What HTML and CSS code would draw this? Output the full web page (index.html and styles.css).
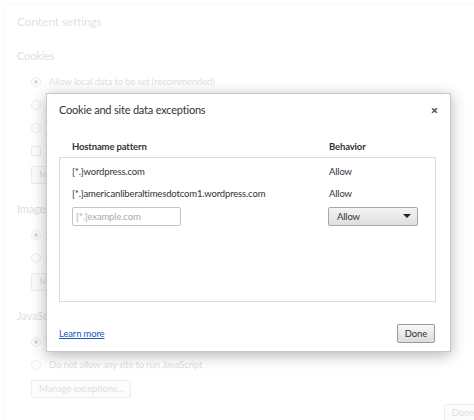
FILE: index.html
```html
<!DOCTYPE html>
<html>
<head>
<meta charset="utf-8">
<link rel="stylesheet" href="styles.css">
</head>
<body>
<div class="page">
  <div class="frame">
    <h1 class="page-title">Content settings</h1>
    <section class="group">
      <h2 class="group-title">Cookies</h2>
      <div class="opt"><span class="radio on"></span>Allow local data to be set (recommended)</div>
      <div class="opt"><span class="radio"></span>Keep local data only until I quit my browser</div>
      <div class="opt"><span class="radio"></span>Block sites from setting any data</div>
      <div class="opt"><span class="check"></span>Block third-party cookies and site data</div>
      <div class="btns"><span class="pbtn">Manage exceptions...</span><span class="pbtn">All cookies and site data...</span></div>
    </section>
    <section class="group">
      <h2 class="group-title">Images</h2>
      <div class="opt"><span class="radio on"></span>Show all images (recommended)</div>
      <div class="opt"><span class="radio"></span>Do not show any images</div>
      <div class="btns"><span class="pbtn">Manage exceptions...</span></div>
    </section>
    <section class="group">
      <h2 class="group-title">JavaScript</h2>
      <div class="opt"><span class="radio on"></span>Allow all sites to run JavaScript (recommended)</div>
      <div class="opt"><span class="radio"></span>Do not allow any site to run JavaScript</div>
      <div class="btns"><span class="pbtn">Manage exceptions...</span></div>
    </section>
    <div class="page-foot"><span class="pbtn">Done</span></div>
  </div>
  <div class="veil"></div>
</div>

<div class="dialog">
  <div class="dlg-head">
    <span class="dlg-title">Cookie and site data exceptions</span>
    <span class="close">&#215;</span>
  </div>
  <div class="cols">
    <span class="col-host">Hostname pattern</span>
    <span class="col-beh">Behavior</span>
  </div>
  <div class="list">
    <div class="row"><span class="host">[*.]wordpress.com</span><span class="beh">Allow</span></div>
    <div class="row"><span class="host">[*.]americanliberaltimesdotcom1.wordpress.com</span><span class="beh">Allow</span></div>
    <div class="row new">
      <span class="host"><span class="input">[*.]example.com</span></span>
      <span class="beh"><span class="select">Allow<span class="caret"></span></span></span>
    </div>
  </div>
  <div class="dlg-foot">
    <a class="learn" href="#">Learn more</a>
    <span class="done">Done</span>
  </div>
</div>
</body>
</html>
```

FILE: styles.css
```css
* { box-sizing: border-box; }
html, body { margin: 0; padding: 0; }
body {
  width: 474px;
  height: 420px;
  overflow: hidden;
  background: #fff;
  font-family: "Lato", "Open Sans", sans-serif;
  font-size: 9.5px;
  letter-spacing: -0.15px;
  color: #333;
  position: relative;
}
.page { position: relative; width: 474px; height: 420px; padding: 4px 0 0 4px; }
.frame {
  border-left: 1px solid #d8d8d8;
  border-top: 1px solid #e4e4e4;
  height: 100%;
  padding: 8px 0 0 12px;
  display: flex;
  flex-direction: column;
}
.page-title { margin: 0; font-size: 12px; font-weight: normal; color: #555; height: 18px; line-height: 18px; }
.group { display: flex; flex-direction: column; margin-top: 17px; }
.group-title { margin: 0 0 6px; font-size: 11px; font-weight: normal; color: #444; line-height: 16px; }
.opt { display: flex; align-items: center; height: 23px; padding-left: 14px; color: #444; gap: 8px; }
.radio { width: 10px; height: 10px; border: 1px solid #999; border-radius: 50%; background: #f4f4f4; position: relative; }
.radio.on::after { content: ""; position: absolute; left: 2px; top: 2px; width: 4px; height: 4px; border-radius: 50%; background: #333; }
.check { width: 10px; height: 10px; border: 1px solid #999; background: #f4f4f4; }
.btns { display: flex; gap: 6px; padding: 4px 0 0 14px; }
.pbtn { display: inline-block; height: 18px; line-height: 16px; border: 1px solid #999; border-radius: 2px; padding: 0 7px; color: #444; background: #eee; }
.page-foot { display: flex; justify-content: flex-end; margin-top: 6px; margin-right: -8px; }
.veil { position: absolute; inset: 0; background: rgba(255,255,255,0.82); }

.dialog {
  position: absolute;
  left: 46px;
  top: 93px;
  width: 405px;
  height: 259px;
  background: #fff;
  border: 1px solid #c8c8c8;
  box-shadow: 0 3px 14px rgba(0,0,0,0.3);
  display: flex;
  flex-direction: column;
  padding: 0 14px 0 12px;
}
.dlg-head { display: flex; justify-content: space-between; align-items: flex-start; height: 42px; padding-top: 7px; }
.dlg-title { font-size: 11px; letter-spacing: -0.2px; color: #333; line-height: 18px; }
.close { font-size: 13px; font-weight: bold; color: #555; line-height: 12px; margin-top: 3px; margin-right: -2px; font-family: "Open Sans", sans-serif; }
.cols { display: flex; height: 21px; align-items: center; padding-left: 13px; font-weight: bold; color: #333; }
.col-host { width: 257px; }
.list { border: 1px solid #d9d9d9; height: 145px; padding-top: 2px; }
.row { display: flex; align-items: center; height: 22px; padding-left: 12px; }
.row.new { height: 24px; }
.host { width: 257px; }
.input { display: inline-block; width: 109px; height: 19px; line-height: 17px; border: 1px solid #c4c4c4; border-radius: 2px; padding-left: 3px; color: #aaa; }
.select { display: flex; align-items: center; justify-content: space-between; width: 90px; height: 19px; margin-left: -1px; border: 1px solid #a8a8a8; border-radius: 2px; padding: 0 6px 0 8px; background: linear-gradient(#f4f4f4, #dedede); color: #333; }
.caret { width: 0; height: 0; border-left: 4px solid transparent; border-right: 4px solid transparent; border-top: 4px solid #222; }
.dlg-foot { display: flex; justify-content: space-between; align-items: center; margin-top: 22px; }
.learn { color: #2255bb; text-decoration: underline; }
.done { display: inline-block; height: 19px; width: 38px; text-align: center; line-height: 17px; border: 1px solid #999; border-radius: 2px; background: linear-gradient(#f7f7f7, #dcdcdc); color: #333; margin-right: 1px; }
```
